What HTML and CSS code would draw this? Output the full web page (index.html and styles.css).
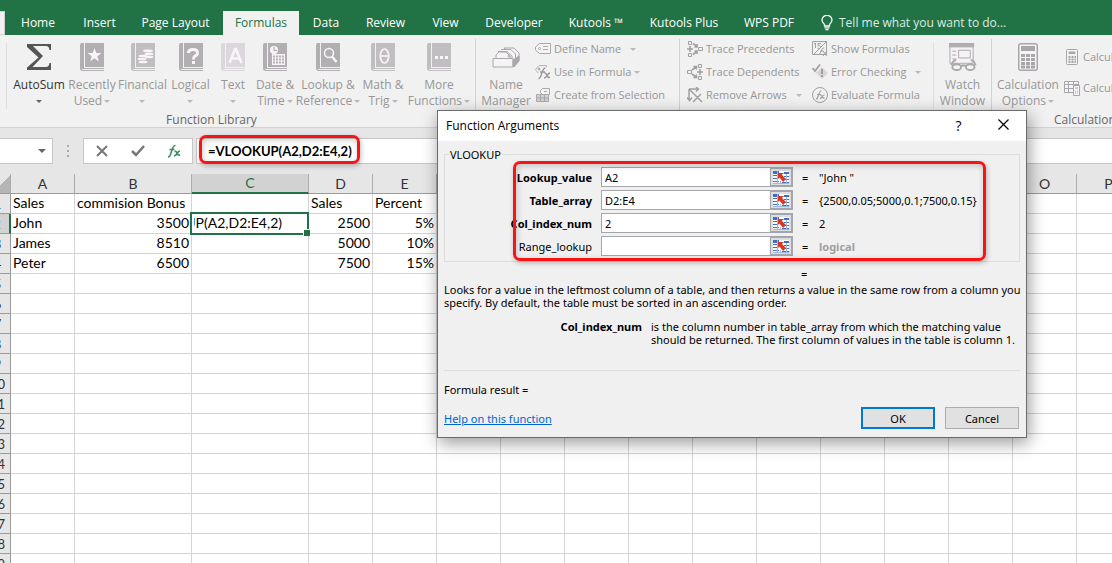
FILE: index.html
```html
<!DOCTYPE html>
<html lang="en">
<head>
<meta charset="utf-8">
<title>Function Arguments</title>
<link rel="stylesheet" href="styles.css">
</head>
<body>
<svg class="defs" aria-hidden="true">
  <symbol id="book" viewBox="0 0 24 28">
    <path d="M2 0H4V25H2.5Q1.5 25 1 26.500V1Q1 0 2 0ZM5 0H24V24H5Z"/>
    <path d="M0 2Q0 0 2 0V25H24V26H3Q2 26 2 27H24V28H3Q0 28 0 25Z"/>
  </symbol>
  <symbol id="picker" viewBox="0 0 16 13">
    <path fill="#fff" d="M0 0H16V13H0Z"/>
    <path fill="#3f6fc4" d="M0 0H6V3H0ZM0 4H4V5H0ZM0 7H4V8H0ZM0 10H6V11H0ZM11 1H16V3H11ZM11 5H16V6H11ZM11 8H16V9H11ZM9 11H16V12H9Z"/>
    <path fill="#9cb4de" d="M4 0H5V13H4ZM7 2H11V3H7ZM13 3H14V13H13ZM0 12H16V13H0ZM7 10H8V13H7Z"/>
    <path fill="#d8371d" d="M5 2L10 2L9 4L13 8L10 11L6.500 6.500L5 8Z"/>
  </symbol>
</svg>

<header class="tabs">
  <button class="tab file" aria-label="File"></button>
  <button class="tab">Home</button>
  <button class="tab">Insert</button>
  <button class="tab">Page Layout</button>
  <button class="tab active">Formulas</button>
  <button class="tab">Data</button>
  <button class="tab">Review</button>
  <button class="tab">View</button>
  <button class="tab">Developer</button>
  <button class="tab">Kutools ™</button>
  <button class="tab">Kutools Plus</button>
  <button class="tab">WPS PDF</button>
  <button class="tab tell">
    <svg width="12" height="16" viewBox="0 0 12 16" fill="none" stroke="#fff" stroke-width="1.300"><path d="M3.500 11V9.500C2 8 1 7 1 5A4.800 4.500 0 0 1 11 5C11 7 10 8 8.500 9.500V11ZM3.500 12.800H8.500M4.500 14.700H7.500"/></svg>
    Tell me what you want to do...
  </button>
</header>

<nav class="ribbon">
  <section class="group library">
    <div class="bigs">
      <button class="big on"><svg width="24" height="28" viewBox="0 0 24 28"><path fill="#555" d="M0 1H24V7H22.500Q22 3 19 3H6L16 13L5.500 24H19Q22 24 22.500 20H24V27H0V24.500L11.500 14.500L0 4Z"/></svg><span>AutoSum<br><i class="arrow"></i></span></button>
      <button class="big"><svg width="24" height="28"><use href="#book"/><path fill="#f8f4f8" d="M14.500 5L16.300 10H21.500L17.300 13.200L18.800 18.500L14.500 15.300L10.200 18.500L11.700 13.200L7.500 10H12.700Z"/></svg><span>Recently<br>Used <i class="arrow"></i></span></button>
      <button class="big pale"><svg width="24" height="28"><use href="#book"/><g fill="#f8f4f8"><ellipse cx="17" cy="8" rx="5" ry="1.400"/><ellipse cx="18" cy="11" rx="4.500" ry="1.200"/><ellipse cx="18" cy="14" rx="4.500" ry="1.200"/><ellipse cx="12" cy="13" rx="4.500" ry="1.200"/><ellipse cx="11" cy="16" rx="4.500" ry="1.200"/><ellipse cx="12" cy="19" rx="4.500" ry="1.200"/></g></svg><span>Financial<br><i class="arrow"></i></span></button>
      <button class="big"><svg width="24" height="28"><use href="#book"/><path fill="none" stroke="#f8f4f8" stroke-width="3" d="M9.500 10Q9.500 6.500 14 6.500T18.500 10Q18.500 12 15.500 13.500Q14.500 14.200 14.500 16.500M14.500 18V21"/></svg><span>Logical<br><i class="arrow"></i></span></button>
      <button class="big faint"><svg width="24" height="28"><use href="#book"/><path fill="none" stroke="#f8f4f8" stroke-width="2.500" d="M8.500 20L14 6H15L20.500 20M10.500 15.500H18.500"/></svg><span>Text<br><i class="arrow"></i></span></button>
      <button class="big"><svg width="24" height="28"><use href="#book"/><circle cx="11" cy="7" r="4" fill="#f8f4f8"/><path stroke="#a5a5a5" fill="none" d="M11 4V7.500H14"/><path fill="#f8f4f8" d="M9 11H22V22H9Z"/><path stroke="#b1afb1" stroke-width="2" stroke-dasharray="2 1" d="M10 13.500H21.500M10 16.500H21.500M10 19.500H21.500"/></svg><span>Date &amp;<br>Time <i class="arrow"></i></span></button>
      <button class="big"><svg width="24" height="28"><use href="#book"/><circle cx="13" cy="10" r="4.500" fill="none" stroke="#f8f4f8" stroke-width="1.600"/><path stroke="#f8f4f8" stroke-width="2.500" d="M16 13.500L20.500 19"/></svg><span>Lookup &amp;<br>Reference <i class="arrow"></i></span></button>
      <button class="big pale"><svg width="24" height="28"><use href="#book"/><g fill="none" stroke="#f8f4f8" stroke-width="1.700"><ellipse cx="13.500" cy="13" rx="4.200" ry="7"/><path d="M9.500 13H17.500"/></g></svg><span>Math &amp;<br>Trig <i class="arrow"></i></span></button>
      <button class="big pale"><svg width="24" height="28"><use href="#book"/><path fill="#f8f4f8" d="M8 13H11V16H8ZM13 13H16V16H13ZM18 13H21V16H18Z"/></svg><span>More<br>Functions <i class="arrow"></i></span></button>
    </div>
    <div class="caption">Function Library</div>
  </section>

  <section class="group names">
    <button class="big"><svg width="28" height="28" viewBox="0 0 28 28" fill="#f6f3f6" stroke="#aaa8aa"><path d="M12 5H22L27 10V18L22 24V12Z"/><path d="M9 6.500H19L23.500 11V20M6 8.500H15L20 13V18M4 16V12L7 9H14L18 13V17"/><path d="M1 15.500H21V24H1Z"/><path fill="#aaa8aa" d="M21 24L27 18V13L21 17Z"/><circle cx="17" cy="13" r="1"/></svg><span>Name<br>Manager</span></button>
    <div class="smalls">
      <button class="small"><svg width="16" height="16" fill="#f6f3f6" stroke="#aaa8aa"><path d="M4.500 2.500H15.500V12.500H4.500L.5 9V6Z"/><path d="M8 5.500H13M8 8.500H13"/><circle cx="4.500" cy="7.500" r="1"/></svg>Define Name <i class="arrow far"></i></button>
      <button class="small"><svg width="16" height="16" fill="none" stroke="#999"><path stroke="#b8b5b8" d="M3 9L.5 5.500L4 1.500H11.500V3"/><circle cx="4" cy="5" r="1"/><path stroke-width="1.400" d="M3.500 14.500C7 15 6.500 3.500 10.500 4M5 8H10M9.500 9.500C12 8 11.500 14.500 15 13.500M15 9C12 9.500 12 14 9 14"/></svg>Use in Formula <i class="arrow"></i></button>
      <button class="small"><svg width="16" height="16" fill="#f6f3f6" stroke="#aaa8aa"><path d="M7.500 1.500H14.500V7.500H7.500L5.500 5.500V3.500Z"/><path fill="#d4d0d4" d="M1.500 7.500H13.500V14.500H1.500Z"/><path d="M1 11H13.500M5.500 7.500V14.500M9.500 7.500V14.500M9 4.500H12"/></svg>Create from Selection</button>
    </div>
  </section>

  <section class="group audit">
    <div class="smalls">
      <button class="small"><svg width="16" height="16" fill="none" stroke="#a2a0a2"><path d="M1.500.5H4.500V3.500H1.500ZM1.500 12.500H4.500V15.500H1.500ZM11.500 6.500H15.500V9.500H11.500Z"/><path stroke-width="1.600" d="M0 8H6M3 5V11M6 2.500L10 5.500M10 3V6H7.500M6 13.500L10 10.500M7.500 10H10V13"/></svg>Trace Precedents</button>
      <button class="small"><svg width="16" height="16" fill="none" stroke="#a2a0a2"><path d="M.5 6.500H4.500V9.500H.5ZM11.500.5H14.500V3.500H11.500ZM11.500 12.500H14.500V15.500H11.500Z"/><path stroke-width="1.600" d="M10 8H16M13 5V11M5 6L9 3M6.500 2.500H9.500V5.500M5 10L9 13M9.500 10.500V13.500H6.500"/></svg>Trace Dependents</button>
      <button class="small"><svg width="16" height="16" fill="none" stroke="#a2a0a2" stroke-width="1.500"><path d="M2 2V13M0 10.500L2.500 13.500L5 10.500M2 2H11M9 0L11.500 2L9 4.500M2 2L15 15M14 7L6 15"/></svg>Remove Arrows <i class="arrow far"></i></button>
    </div>
    <div class="smalls">
      <button class="small"><svg width="16" height="16" fill="none" stroke="#a2a0a2"><path d="M.5.500H14.500V13.500H.5ZM15 0L1 14M2 3L3.500 2V7M9 2.500H6V4.500Q9 4.500 8.500 6.500T5.500 7M7 13C9.500 13 8.500 7 12 7M8.500 10H11.500M11 10L15 15M15 10L11 15"/></svg>Show Formulas</button>
      <button class="small"><svg width="16" height="16"><path fill="#d9d5d9" d="M10 3L16 9L10 15L4 9Z"/><path fill="#a2a0a2" d="M9 5H11V10H9ZM9 11H11V13H9Z"/><path fill="none" stroke="#a2a0a2" stroke-width="1.800" d="M.5 4L3 7L8 .5"/></svg>Error Checking <i class="arrow far"></i></button>
      <button class="small"><svg width="16" height="16" fill="none" stroke="#a2a0a2"><circle cx="8" cy="8" r="7.500"/><path stroke-width="1.200" d="M4 12C7 12.500 6 3.500 9.500 4M5 7.500H9M8 8C10.500 7.500 10 12 12.500 11M12.500 8C10 8 10.500 11 8 11.500"/></svg>Evaluate Formula</button>
    </div>
    <button class="big watch"><svg width="28" height="28" viewBox="0 0 28 29" fill="#f6f3f6" stroke="#aaa8aa"><path d="M.5.500H24.500V21H.5Z"/><path fill="#b1afb1" d="M0 0H25V4H0Z"/><path d="M3 8.500H7M3 12.500H7M3 16.500H7M9.500 7.500H21.500V15.500H9.500Z"/><g stroke-width="2"><path fill="none" d="M2 23Q4 17 7 18M27 23Q25 17 22 18"/><ellipse cx="7.500" cy="25" rx="4.500" ry="3"/><ellipse cx="21.500" cy="25" rx="4.500" ry="3"/><path d="M12 24Q14.500 22 17 24"/></g></svg><span>Watch<br>Window</span></button>
  </section>

  <section class="group calc">
    <div class="calcrow">
      <button class="big"><svg width="20" height="28" fill="#f6f3f6" stroke="#a8a6a8"><rect x=".75" y=".75" width="18.500" height="26.500" rx="2" stroke-width="1.500"/><path fill="#a8a6a8" stroke="none" d="M3 3H17V8H3Z"/><path stroke-width="3" stroke-dasharray="4 1" d="M3 12.500H17M3 16.500H17M3 20.500H17M3 24H17"/></svg><span>Calculation<br>Options <i class="arrow"></i></span></button>
      <div class="smalls two">
        <button class="small"><svg width="16" height="16" fill="#f6f3f6" stroke="#a8a6a8"><rect x="2.500" y=".5" width="11" height="15" rx="1"/><path fill="#a8a6a8" d="M5 3H11V4.500H5Z"/><path stroke-width="2" stroke-dasharray="2 1" d="M4.500 8H12M4.500 10.500H12M4.500 13H12"/></svg>Calculate Now</button>
        <button class="small"><svg width="16" height="16" fill="#f6f3f6" stroke="#a8a6a8"><path d="M.5 1.500H14.500V12.500H.5ZM.5 4.500H14.500M.5 8.500H14.500M4.500 1.500V12.500M9.500 1.500V12.500"/><path d="M9.500 5.500H15.500V15.500H9.500ZM11 8H14M11 11H12M13 11H14M11 13H12M13 13H14"/></svg>Calculate Sheet</button>
      </div>
    </div>
    <div class="caption">Calculation</div>
  </section>
</nav>

<div class="formula-bar">
  <button class="name-box" aria-label="Name box list"><i class="arrow dark"></i></button>
  <span class="dots"><i></i><i></i><i></i></span>
  <div class="edit-buttons">
    <button aria-label="Cancel entry"><svg width="12" height="12" stroke="#767676" stroke-width="2"><path d="M1 1L11 11M11 1L1 11"/></svg></button>
    <button aria-label="Enter"><svg width="14" height="12" fill="none" stroke="#767676" stroke-width="2.500"><path d="M1 6L5 10L13 1"/></svg></button>
    <button aria-label="Insert function"><svg width="14" height="14" fill="none" stroke="#3c8a5e" stroke-width="1.600"><path d="M1 13C5 13.500 4 1 8.500 1.500M2.500 5.500H7.500M7.500 7.500C10.500 6 9.500 12.500 13 11M13 7C10 7 10.500 11.500 7 12"/></svg></button>
  </div>
  <div class="formula">
    <input type="text" aria-label="Formula" value="=VLOOKUP(A2,D2:E4,2)">
    <span class="mark"></span>
  </div>
</div>

<main class="sheet"><table id="grid"></table></main>

<div class="dialog" role="dialog" aria-labelledby="dlg-title">
  <div class="dlg-head">
    <span id="dlg-title">Function Arguments</span>
    <button class="help" aria-label="Help">?</button>
    <button aria-label="Close"><svg width="11" height="11" stroke="#000" stroke-width="1.200"><path d="M.5.500L10.500 10.500M10.500.500L.5 10.500"/></svg></button>
  </div>
  <div class="dlg-body">
    <fieldset>
      <legend>VLOOKUP</legend>
      <div class="arg req"><label for="a1">Lookup_value</label><div class="field"><input id="a1" type="text" value="A2"><button aria-label="Pick Lookup_value"><svg width="16" height="13"><use href="#picker"/></svg></button></div><span>=</span><output>"John "</output></div>
      <div class="arg req"><label for="a2">Table_array</label><div class="field"><input id="a2" type="text" value="D2:E4"><button aria-label="Pick Table_array"><svg width="16" height="13"><use href="#picker"/></svg></button></div><span>=</span><output>{2500,0.05;5000,0.1;7500,0.15}</output></div>
      <div class="arg req"><label for="a3">Col_index_num</label><div class="field"><input id="a3" type="text" value="2"><button aria-label="Pick Col_index_num"><svg width="16" height="13"><use href="#picker"/></svg></button></div><span>=</span><output>2</output></div>
      <div class="arg"><label for="a4">Range_lookup</label><div class="field"><input id="a4" type="text"><button aria-label="Pick Range_lookup"><svg width="16" height="13"><use href="#picker"/></svg></button></div><span>=</span><output class="type">logical</output></div>
      <span class="mark"></span>
    </fieldset>
    <div class="arg total"><span>=</span></div>
    <p class="about">Looks for a value in the leftmost column of a table, and then returns a value in the same row from a column you<br>specify. By default, the table must be sorted in an ascending order.</p>
    <div class="detail"><b>Col_index_num</b><p>is the column number in table_array from which the matching value<br>should be returned. The first column of values in the table is column 1.</p></div>
    <p class="result">Formula result =</p>
    <div class="dlg-foot">
      <a href="#help">Help on this function</a>
      <button class="ok">OK</button>
      <button>Cancel</button>
    </div>
  </div>
</div>
<script src="sheet.js"></script>
</body>
</html>
```
FILE: styles.css
```css
* { box-sizing: border-box; }
body {
  margin: 0;
  height: 100vh;
  display: flex;
  flex-direction: column;
  overflow: hidden;
  font: 12px/16px "Open Sans", "Noto Sans", sans-serif;
  color: #000;
  background: #e6e6e6;
}
button, input { font: inherit; color: inherit; border: 0; padding: 0; margin: 0; background: none; border-radius: 0; }
p { margin: 0; }
svg { flex: none; }
.defs { position: absolute; width: 0; height: 0; }

.tabs {
  flex: none;
  display: grid;
  grid-template-columns: 5px 66px 57px 95px 76px 54px 65px 55px 82px 82px 94px 76px 1fr;
  padding-top: 11px;
  background: #217346;
  color: #fff;
}
.tab { height: 24px; white-space: nowrap; }
.tab.file { background: #f1f1f1; border: 1px solid #cfcfcf; border-left: 0; }
.tab.active { background: #f1f1f1; color: #217346; }
.tab.tell { display: flex; align-items: center; gap: 6px; padding-left: 14px; color: #dcebe2; }

.ribbon {
  flex: none;
  display: flex;
  height: 93px;
  background: #f1f1f1;
  border-bottom: 1px solid #d2d2d2;
  color: #979797;
  white-space: nowrap;
  overflow: hidden;
}
.group { position: relative; flex: none; display: flex; padding-top: 8px; }
.group::after { content: ""; position: absolute; right: 0; top: 4px; height: 84px; border-right: 1px solid #d2d2d2; }
.library { flex-direction: column; width: 476px; }
.bigs { display: grid; grid-template-columns: 54px 52px 49px 47px 38px 46px 60px 50px 62px; margin-left: 6px; padding-left: 5px; border-left: 1px solid #dedede; }
.big { display: flex; flex-direction: column; align-items: center; gap: 6px; height: 66px; }
.big svg { fill: #b1afb1; }
.big.pale svg { fill: #c1bec1; }
.big.faint svg { fill: #dcd7dc; }
.big.on { color: #333; }
.big span { display: block; margin: 0 -8px; }
.arrow { display: inline-block; vertical-align: 2px; border: 3px solid transparent; border-top: 3px solid #b9b9b9; border-bottom: 0; }
.big .arrow { margin-left: -1px; }
.arrow.far { margin-left: 6px; }
.on .arrow, .arrow.dark { border-top-color: #666; }
.caption { color: #666; text-align: center; margin-top: 3px; padding-right: 53px; }
.names { width: 204px; padding-left: 6px; }
.names .big { width: 48px; margin-right: 5px; }
.names .big svg, .watch svg { fill: #f6f3f6; }
.smalls { display: flex; flex-direction: column; gap: 7px; margin-top: -2px; }
.small { display: flex; align-items: center; gap: 3px; height: 16px; font-size: 11px; line-height: 16px; }
.audit { width: 312px; padding-left: 7px; }
.audit .smalls { width: 125px; }
.audit .smalls + .smalls { width: 120px; }
.watch { width: 58px; margin-left: 1px; border-left: 1px solid #dedede; }
.calc { flex: 1; flex-direction: column; }
.calcrow { display: flex; }
.calc .big { width: 72px; }
.calc .big svg { fill: #f6f3f6; }
.two { gap: 15px; margin-top: 6px; }
.calc .caption { text-align: left; padding: 0 0 0 62px; }

.formula-bar { flex: none; display: flex; padding: 10px 0; height: 46px; }
.formula-bar > * { background: #fff; border: 1px solid #c6c6c6; height: 26px; }
.formula-bar .name-box { width: 53px; border-left: 0; padding-right: 6px; text-align: right; }
.arrow.dark { border-width: 4px 4px 0; }
.formula-bar .dots { width: 30px; border: 0; background: none; display: flex; flex-direction: column; align-items: center; justify-content: center; gap: 3px; }
.dots i { width: 2px; height: 2px; background: #aaa; }
.edit-buttons { display: grid; grid-template-columns: repeat(3, 1fr); width: 110px; margin-right: 3px; }
.edit-buttons button { display: grid; place-items: center; }
.formula { position: relative; flex: 1; border-right: 0; }
.formula input { display: block; width: 100%; height: 24px; padding-left: 11px; font: bold 13px "Lato", sans-serif; }
.mark { position: absolute; border: 3px solid #f81414; border-radius: 7px; pointer-events: none; box-shadow: 1px 2px 5px rgba(0,0,0,.25), inset 1px 2px 6px rgba(0,0,0,.2); }
.formula .mark { left: 2px; top: -4px; width: 161px; height: 29px; }

.sheet { flex: 1; overflow: hidden; margin-left: -15px; background: #fff; font: 14px/18px "Lato", sans-serif; }
.sheet table { table-layout: fixed; width: 0; border-collapse: separate; border-spacing: 0; }
.sheet th { height: 20px; font-weight: normal; background: #e6e6e6; color: #333; padding: 0; border-right: 1px solid #ababab; border-bottom: 1px solid #9b9b9b; }
.sheet tbody th { border-color: #9b9b9b; font-size: 13px; }
.sheet td { height: 20px; padding: 0 2px 1px 2px; border-right: 1px solid #d4d4d4; border-bottom: 1px solid #d4d4d4; white-space: nowrap; }
.sheet .num { text-align: right; }
.sheet .corner { background: linear-gradient(135deg, #e6e6e6 60%, #b5b5b5 61%); }
.sheet thead .current { background: #d2d2d2; color: #217346; border-bottom: 2px solid #217346; }
.sheet tbody .current { background: #d2d2d2; border-right: 2px solid #217346; }
.sheet .editing { position: relative; }
.editing div { display: flex; justify-content: flex-end; width: 88px; overflow: hidden; }
.editing::before { content: ""; position: absolute; inset: -2px -1px -2px -2px; border: 2px solid #217346; }
.editing::after { content: ""; position: absolute; right: -2px; bottom: -3px; width: 6px; height: 6px; background: #217346; border: 1px solid #fff; border-width: 1px 0 0 1px; }
.c26 { width: 26px; } .c64 { width: 64px; } .c117 { width: 117px; }

.dialog {
  position: absolute;
  left: 437px;
  top: 110px;
  width: 590px;
  border: 1px solid #6b6b6b;
  background: #f0f0f0;
  box-shadow: 2px 5px 16px rgba(0,0,0,.4);
  font: 11px/13px "Noto Sans", "Open Sans", sans-serif;
}
.dlg-head { display: flex; align-items: center; height: 30px; background: #fff; padding-left: 8px; font: 12px/16px "Open Sans", sans-serif; }
.dlg-head span { flex: 1; }
.dlg-head button { width: 45px; height: 30px; }
.dlg-head .help { font-size: 14px; }
.dlg-body { padding: 7px 6px 8px; }
fieldset { position: relative; margin: 0; padding: 6px 0 3px; border: 1px solid #dcdcdc; height: 114px; }
legend { margin-left: 4px; padding: 0 1px; height: 13px; }
.arg { display: grid; grid-template-columns: 147px 192px 8px 1fr; column-gap: 9px; align-items: center; height: 20px; margin-bottom: 3px; }
.arg label { text-align: right; white-space: nowrap; }
.req label { font-weight: bold; }
.field { display: flex; height: 20px; border: 1px solid #a5a5ad; background: #fff; }
.field input { flex: 1; min-width: 0; padding-left: 3px; }
.field button { display: grid; place-items: center; width: 22px; border: 1px solid #a5a5ad; background: #dedede; }
.type { color: #a0a0a0; font-weight: bold; }
fieldset .mark { left: 68px; top: 0; width: 473px; height: 100px; }
.total { margin: 1px 0 0; }
.total span { grid-column: 3; }
.about { white-space: nowrap; }
.detail { display: grid; grid-template-columns: 198px 1fr; gap: 9px; margin-top: 11px; padding-bottom: 24px; border-bottom: 1px solid #dcdcdc; white-space: nowrap; }
.detail b { text-align: right; }
.result { margin: 12px 0 11px; }
.dlg-foot { display: flex; gap: 10px; align-items: center; margin-right: 1px; }
.dlg-foot a { flex: 1; color: #0066cc; }
.dlg-foot button { width: 74px; height: 22px; border: 1px solid #adadad; background: #e1e1e1; }
.dlg-foot .ok { border: 2px solid #0078d7; }
```
FILE: sheet.js
```js
const columns = "ABCDEFGHIJKLMNOPQRSTUVWXYZ".split("");
const editing = "UP(A2,D2:E4,2)";
const data = [
  ["Sales", "commision Bonus", "", "Sales", "Percent"],
  ["John", 3500, editing, 2500, "5%"],
  ["James", 8510, "", 5000, "10%"],
  ["Peter", 6500, "", 7500, "15%"]
];
const width = i => (i === 1 || i === 2 ? "c117" : "c64");

let html = '<thead><tr><th class="c26 corner"></th>';
columns.forEach((name, i) => {
  html += `<th class="${width(i)}${name === "C" ? " current" : ""}">${name}</th>`;
});
html += "</tr></thead><tbody>";
for (let r = 0; r < 50; r++) {
  html += `<tr><th class="${r === 1 ? "current" : ""}">${r + 1}</th>`;
  columns.forEach((_, c) => {
    const value = (data[r] || [])[c] ?? "";
    if (value === editing) html += `<td class="editing"><div>${value}</div></td>`;
    else html += `<td class="${/^\d/.test(value) ? "num" : ""}">${value}</td>`;
  });
  html += "</tr>";
}
document.getElementById("grid").innerHTML = html + "</tbody>";
```
